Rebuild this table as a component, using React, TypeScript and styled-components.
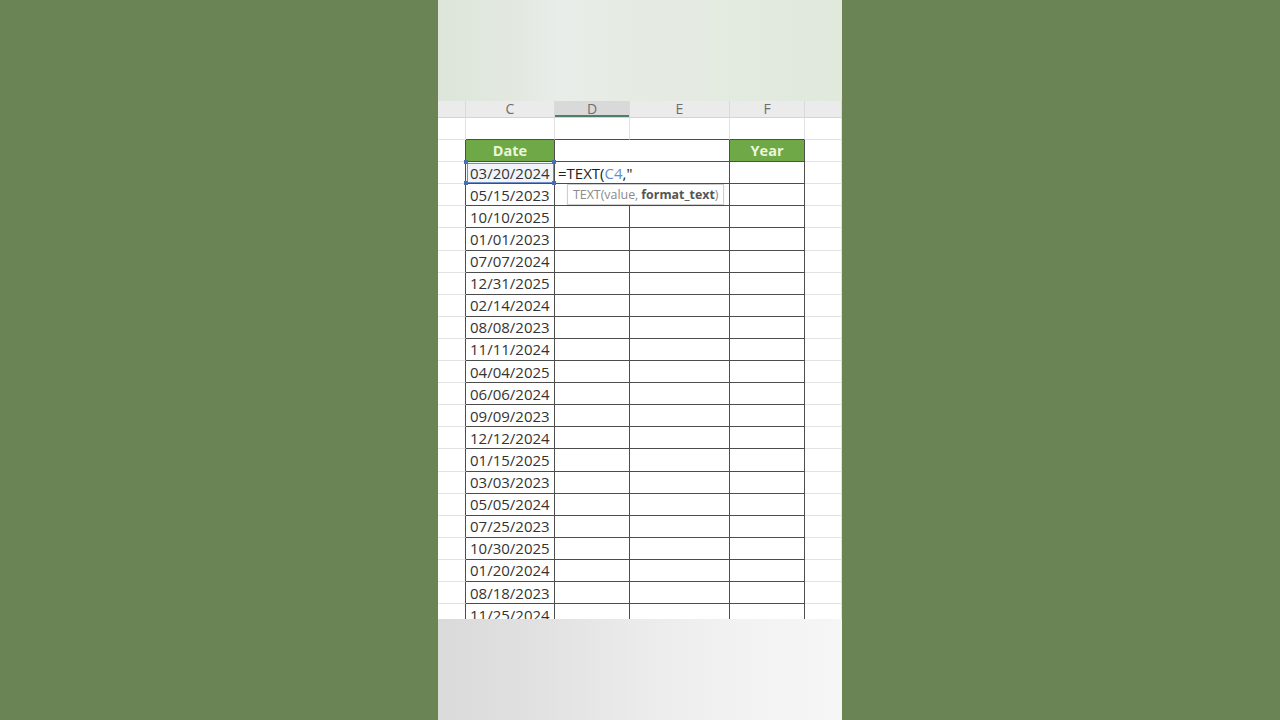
import React from "react";
import styled, { createGlobalStyle } from "styled-components";

const Global = createGlobalStyle`
  html, body { margin: 0; padding: 0; }
  body { background: #6b8455; font-family: "Open Sans", "Liberation Sans", sans-serif; }
`;

const Stage = styled.div`
  width: 1280px;
  height: 720px;
  display: flex;
  justify-content: center;
  background: #6b8455;
  overflow: hidden;
`;

const Phone = styled.div`
  width: 404px;
  height: 720px;
  display: flex;
  flex-direction: column;
  background: #fff;
`;

const TopShade = styled.div`
  height: 101px;
  flex: none;
  background: linear-gradient(90deg, #dde5da 0%, #e3e9e1 20%, #e9ede9 30%, #e6ebe4 45%, #e3eae0 75%, #e0e9dc 100%);
`;

const BottomShade = styled.div`
  height: 101px;
  flex: none;
  background: linear-gradient(90deg, #dadada 0%, #e1e1e1 25%, #ebebeb 50%, #f2f2f2 75%, #f6f6f6 100%);
`;

const cols = "28px 89px 75px 100px 75px 37px";

const HeaderBar = styled.div`
  height: 16px;
  flex: none;
  display: grid;
  grid-template-columns: ${cols};
  background: #ebebeb;
  border-bottom: 1px solid #d4d4d4;
  position: relative;
`;

const ColHead = styled.div<{ $sel?: boolean }>`
  display: flex;
  align-items: center;
  justify-content: center;
  font-size: 14px;
  line-height: 1;
  color: #6e6e6e;
  border-right: 1px solid #dadada;
  background: ${(p) => (p.$sel ? "#d9d9d9" : "transparent")};
  box-shadow: ${(p) => (p.$sel ? "inset 0 -2px 0 #4f7f68" : "none")};
`;

const Sheet = styled.div`
  flex: 1;
  overflow: hidden;
  display: grid;
  grid-template-columns: ${cols};
  grid-auto-rows: 22.1px;
  align-content: start;
`;

const dark = "#4d4d4d";
const light = "#e2e2e2";

const Cell = styled.div<{
  $span?: number;
  $table?: boolean;
  $above?: boolean;
  $leftEdge?: boolean;
  $head?: boolean;
}>`
  box-sizing: border-box;
  grid-column: span ${(p) => p.$span ?? 1};
  position: relative;
  display: flex;
  align-items: center;
  padding: 0 4px;
  font-size: 15px;
  color: #333;
  white-space: nowrap;
  border-right: 1px solid ${(p) => (p.$table || p.$leftEdge ? dark : light)};
  border-bottom: 1px solid ${(p) => (p.$table || p.$above ? dark : light)};
  background: ${(p) => (p.$head ? "#6fa947" : "#fff")};
  ${(p) =>
    p.$head &&
    `
    justify-content: center;
    color: #eaf6dc;
    font-weight: 700;
    font-size: 14.5px;
  `}
`;

const SelCell = styled(Cell)`
  background: #f1f4f9;
  outline: 1px solid #6f8fc6;
  outline-offset: -2px;
  z-index: 2;
`;

const Handle = styled.span<{ $pos: "tl" | "bl" | "tr" | "br" }>`
  position: absolute;
  width: 4px;
  height: 4px;
  background: #4a6fb0;
  ${(p) => (p.$pos[0] === "t" ? "top: -2px;" : "bottom: -2px;")}
  ${(p) => (p.$pos[1] === "l" ? "left: -2px;" : "right: -2px;")}
`;

const FormulaCell = styled(Cell)`
  overflow: visible;
`;

const Formula = styled.span`
  font-size: 15px;
  color: #222;
  margin-left: -1px;
  position: relative;
`;

const Ref = styled.span`
  color: #5f8fcf;
`;

const Caret = styled.span`
  position: absolute;
  left: 62px;
  bottom: -3px;
  width: 12px;
  height: 2px;
  background: #6d9a74;
`;

const Tip = styled.div`
  position: absolute;
  left: 12px;
  top: 22px;
  height: 19px;
  padding: 0 5px;
  display: flex;
  align-items: center;
  background: #fff;
  border: 1px solid #cfcfcf;
  box-shadow: 0 1px 2px rgba(0, 0, 0, 0.08);
  font-size: 12.4px;
  color: #8a8a8a;
  z-index: 5;
  white-space: nowrap;
`;

const TipBold = styled.b`
  color: #555;
  font-weight: 700;
  margin-left: 3px;
`;

const dates = [
  "05/15/2023",
  "10/10/2025",
  "01/01/2023",
  "07/07/2024",
  "12/31/2025",
  "02/14/2024",
  "08/08/2023",
  "11/11/2024",
  "04/04/2025",
  "06/06/2024",
  "09/09/2023",
  "12/12/2024",
  "01/15/2025",
  "03/03/2023",
  "05/05/2024",
  "07/25/2023",
  "10/30/2025",
  "01/20/2024",
  "08/18/2023",
  "11/25/2024",
];

export default function App() {
  return (
    <>
      <Global />
      <Stage>
        <Phone>
          <TopShade />
          <HeaderBar>
            <ColHead />
            <ColHead>C</ColHead>
            <ColHead $sel>D</ColHead>
            <ColHead>E</ColHead>
            <ColHead>F</ColHead>
            <ColHead />
          </HeaderBar>
          <Sheet>
            <Cell />
            <Cell $above />
            <Cell $above />
            <Cell $above />
            <Cell $above />
            <Cell />

            <Cell $leftEdge />
            <Cell $table $head>Date</Cell>
            <Cell $table $span={2} />
            <Cell $table $head>Year</Cell>
            <Cell />

            <Cell $leftEdge />
            <SelCell $table>
              03/20/2024
              <Handle $pos="tl" />
              <Handle $pos="bl" />
              <Handle $pos="tr" />
              <Handle $pos="br" />
            </SelCell>
            <FormulaCell $table $span={2}>
              <Formula>
                =TEXT(<Ref>C4</Ref>,"
                <Caret />
              </Formula>
              <Tip>
                TEXT(value,<TipBold>format_text</TipBold>)
              </Tip>
            </FormulaCell>
            <Cell $table />
            <Cell />

            {dates.map((d) => (
              <React.Fragment key={d}>
                <Cell $leftEdge />
                <Cell $table>{d}</Cell>
                <Cell $table />
                <Cell $table />
                <Cell $table />
                <Cell />
              </React.Fragment>
            ))}
          </Sheet>
          <BottomShade />
        </Phone>
      </Stage>
    </>
  );
}
